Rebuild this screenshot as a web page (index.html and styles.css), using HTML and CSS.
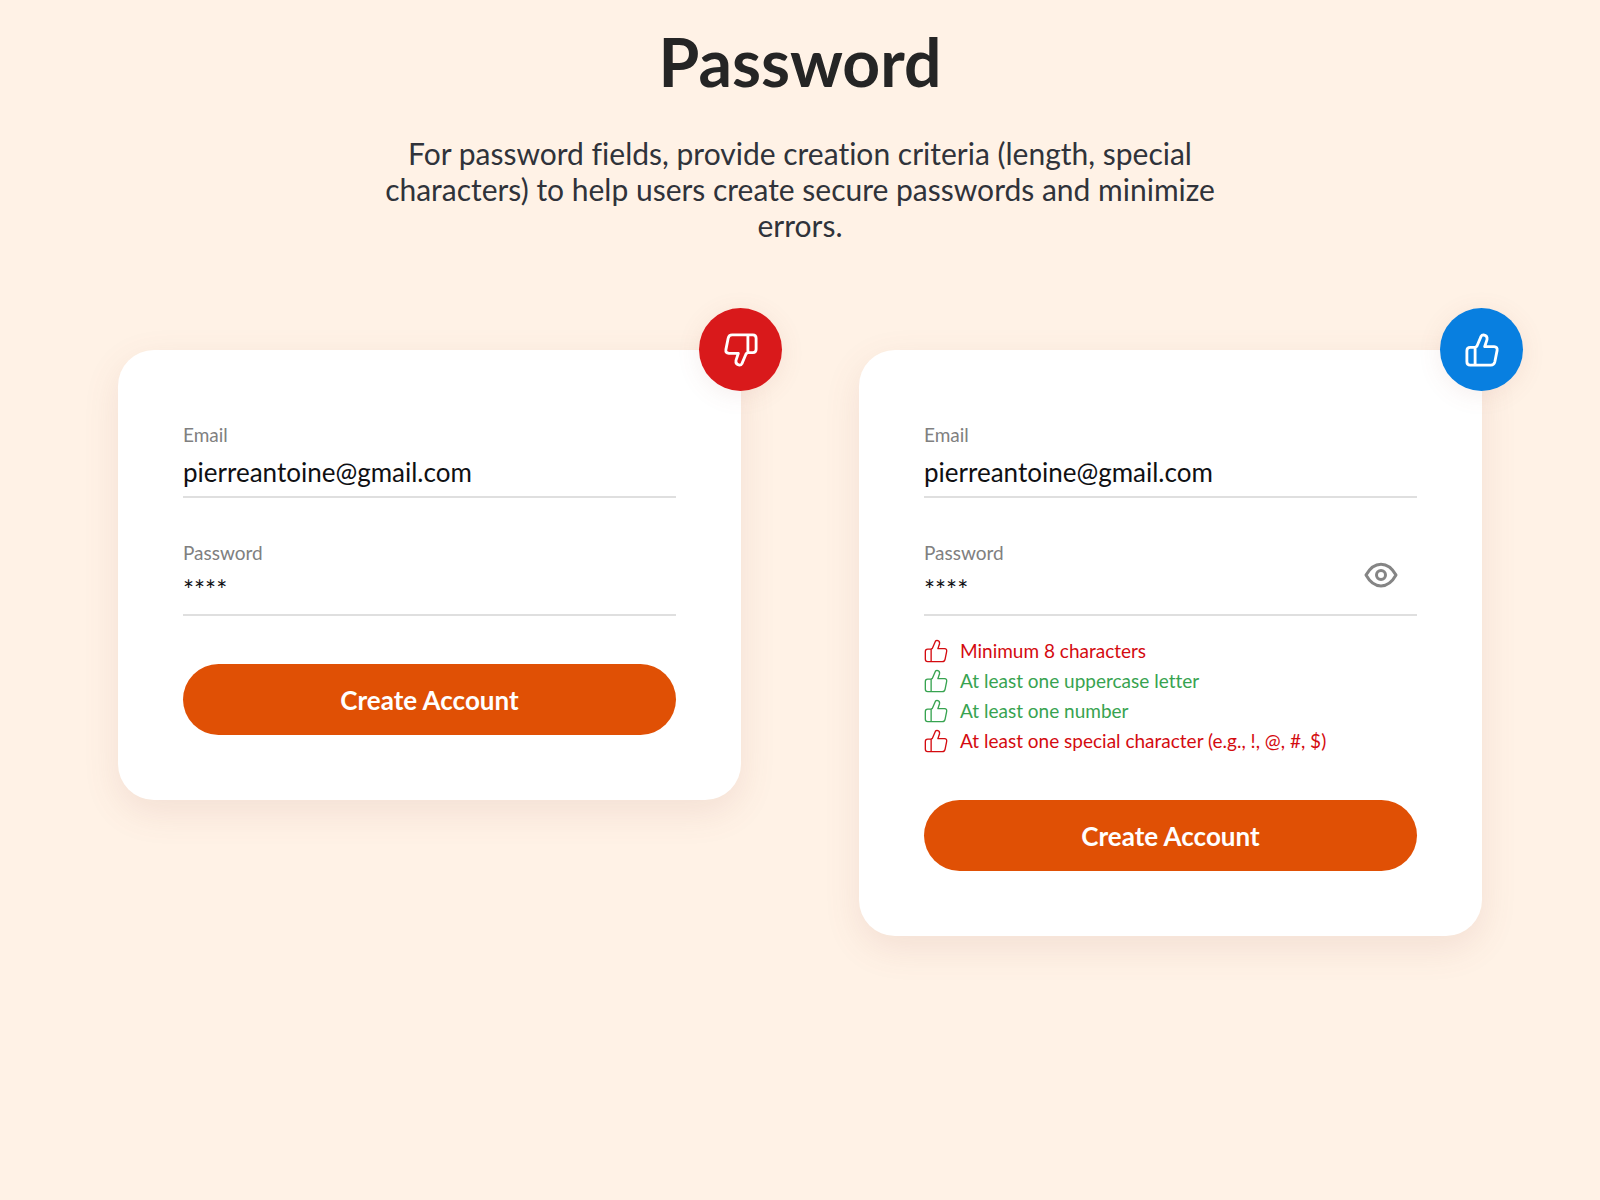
FILE: index.html
```
<!DOCTYPE html>
<html lang="en">
	<head>
		<meta charset="utf-8">
		<meta name="viewport" content="width=device-width, initial-scale=1.0">
		<title>Password</title>
		<link rel="stylesheet" href="styles.css">
	</head>

	<body>
		<!-- shared icons -->
		<svg class="sprite" aria-hidden="true">
			<symbol id="thumb" viewBox="0 0 36 36">
				<path d="M10.7 15.2 L12.6 14 L17 3.6 Q17.800 2 19.6 2 Q24 2.8 23.3 7 L20.8 14.500 H30.800 Q34.6 14.8 34 18.4 L31.6 30.5 Q30.8 34 27.4 34 H5.5 Q2 34 2 30.5 V18.7 Q2 15.2 5.5 15.2 H10.7 V34"/>
			</symbol>
		</svg>

		<div id="header">
			<h1>Password</h1>
			<p>For password fields, provide creation criteria (length, special characters) to help users create secure passwords and minimize errors.</p>
		</div>

		<div id="examples">
			<form class="card">
				<div class="badge bad">
					<svg class="flip"><use href="#thumb"/></svg>
				</div>
				<div class="field">
					<label for="email1">Email</label>
					<input type="text" id="email1" value="pierreantoine@gmail.com">
				</div>
				<div class="field">
					<label for="pass1">Password</label>
					<input type="text" id="pass1" value="****">
				</div>
				<button type="button" class="button">Create Account</button>
			</form>

			<form class="card">
				<div class="badge good">
					<svg><use href="#thumb"/></svg>
				</div>
				<div class="field">
					<label for="email2">Email</label>
					<input type="text" id="email2" value="pierreantoine@gmail.com">
				</div>
				<div class="field">
					<label for="pass2">Password</label>
					<input type="text" id="pass2" value="****">
					<button type="button" class="eye" aria-label="Show password">
						<svg viewBox="0 0 34 26">
							<path d="M2 13 C10 -1.5 24 -1.5 32 13 C24 27.5 10 27.5 2 13 Z"/>
							<circle cx="17" cy="13" r="4.5"/>
						</svg>
					</button>
				</div>
				<ul class="checks">
					<li class="fail"><svg><use href="#thumb"/></svg>Minimum 8 characters</li>
					<li class="pass"><svg><use href="#thumb"/></svg>At least one uppercase letter</li>
					<li class="pass"><svg><use href="#thumb"/></svg>At least one number</li>
					<li class="fail"><svg><use href="#thumb"/></svg>At least one special character (e.g., !, @, #, $)</li>
				</ul>
				<button type="button" class="button">Create Account</button>
			</form>
		</div>
	</body>
</html>
```

FILE: styles.css
```
* {
	box-sizing: border-box;
}

body {
	margin: 0;
	padding: 24px 118px 64px;
	background-color: #fff2e6;
	color: #0f1013;
	font-family: Lato, "Liberation Sans", sans-serif;
	font-variant-ligatures: none;
}

svg {
	fill: none;
	stroke: currentColor;
	stroke-linecap: round;
	stroke-linejoin: round;
}

.sprite {
	position: absolute;
	width: 0;
	height: 0;
}

#header {
	text-align: center;
}

#header h1 {
	margin: 0;
	font-size: 66px;
	line-height: 76px;
	color: #252525;
}

#header p {
	max-width: 864px;
	margin: 35px auto 107px;
	font-size: 30px;
	line-height: 36px;
	color: #30333a;
}

#examples {
	display: grid;
	grid-template-columns: 1fr 1fr;
	gap: 118px;
	align-items: start;
}

.card {
	position: relative;
	padding: 73px 65px 65px;
	background-color: white;
	border-radius: 36px;
	box-shadow: 0 12px 36px rgba(160, 90, 80, 0.12);
}

/* sits on the top right corner of the card */
.badge {
	position: absolute;
	top: -42px;
	right: -41px;
	display: flex;
	align-items: center;
	justify-content: center;
	width: 83px;
	height: 83px;
	border-radius: 50%;
	color: white;
	box-shadow: 0 4px 24px rgba(160, 90, 80, 0.1);
}

.badge svg {
	width: 34px;
	height: 34px;
	stroke-width: 3;
}

.badge .flip {
	transform: rotate(180deg);
}

.bad {
	background-color: #d9191b;
}

.good {
	background-color: #087fe0;
}

.field {
	position: relative;
	margin-bottom: 43px;
	border-bottom: 2px solid #dfdfdf;
}

.field label {
	display: block;
	font-size: 19px;
	line-height: 24px;
	color: #808080;
}

.field input {
	display: block;
	width: 100%;
	height: 49px;
	padding: 0;
	border: 0;
	outline: 0;
	background: none;
	color: inherit;
	font-family: inherit;
	font-size: 26px;
}

.eye {
	position: absolute;
	right: 19px;
	bottom: 26px;
	padding: 0;
	border: 0;
	background: none;
	color: #858585;
	cursor: pointer;
}

.eye svg {
	display: block;
	width: 34px;
	height: 26px;
	stroke-width: 3;
}

.checks {
	margin: -23px 0 0;
	padding: 0;
	list-style: none;
}

.checks li {
	display: flex;
	align-items: center;
	gap: 12px;
	font-size: 19px;
	line-height: 30px;
}

.checks svg {
	width: 24px;
	height: 24px;
	stroke-width: 2;
}

.fail {
	color: #d40b10;
}

.pass {
	color: #37a350;
}

.button {
	display: block;
	width: 100%;
	height: 71px;
	margin-top: 48px;
	border: 0;
	border-radius: 36px;
	background-color: #e05005;
	color: white;
	font-family: inherit;
	font-size: 26px;
	font-weight: bold;
	cursor: pointer;
}

.checks + .button {
	margin-top: 44px;
}
```
